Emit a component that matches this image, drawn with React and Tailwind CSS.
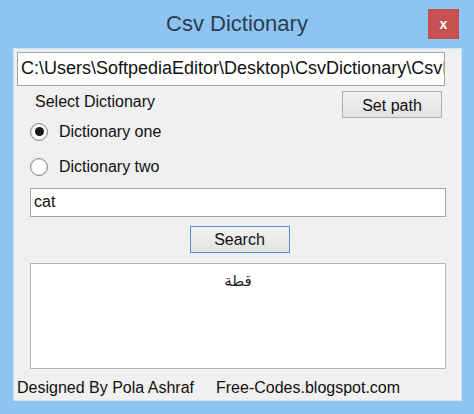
import { useState } from 'react';

const font = { fontFamily: '"Liberation Sans", "DejaVu Sans", Arial, sans-serif' };

const Radio = ({ checked, label, onClick }) => (
    <div className="flex items-center h-[24px] cursor-default" onClick={onClick}>
        <span className="w-[18px] h-[18px] rounded-full border border-[#8a8a8a] bg-white flex items-center justify-center shadow-[inset_0_0_0_1px_#e6e6e6]">
            {checked && <span className="w-[9px] h-[9px] rounded-full bg-[#1a1a1a]"></span>}
        </span>
        <span className="ml-[11px] text-[16px] text-[#111]">{label}</span>
    </div>
);

const App = () => {
    const [dict, setDict] = useState('one');
    const [word, setWord] = useState('cat');

    return (
        <div className="w-[474px] h-[414px] bg-[#8ec4f2] flex flex-col" style={font}>
            {/* Title bar */}
            <div className="h-[48px] grid grid-cols-[1fr_auto_1fr]">
                <div></div>
                <div className="text-[22px] text-[#2b3d52] pt-[10px] leading-[28px]">Csv Dictionary</div>
                <div className="flex justify-end pt-[9px] pr-[15px]">
                    <div className="w-[31px] h-[30px] bg-[#c75050] flex items-center justify-center text-white text-[14px] font-bold leading-none">x</div>
                </div>
            </div>

            {/* Client area */}
            <div className="mx-[12px] ml-[13px] h-[353px] bg-[#f0f0f0] border border-[#cfe3f5] flex flex-col">
                <div className="mt-[3px] ml-[3px] w-[428px] h-[35px] bg-white border border-[#a3a3a3] flex items-center pl-[3px] overflow-hidden whitespace-nowrap text-[18px] text-[#111]">
                    C:\Users\SoftpediaEditor\Desktop\CsvDictionary\CsvDictionary.csv
                </div>

                <div className="flex justify-between pl-[16px] pr-[19px] mt-[5px]">
                    <div className="flex flex-col">
                        <div className="ml-[5px] text-[16px] leading-[18px] mt-[2px] text-[#111]">Select Dictionary</div>
                        <div className="mt-[9px]">
                            <Radio checked={dict === 'one'} label="Dictionary one" onClick={() => setDict('one')} />
                        </div>
                        <div className="mt-[11px]">
                            <Radio checked={dict === 'two'} label="Dictionary two" onClick={() => setDict('two')} />
                        </div>
                    </div>
                    <button className="w-[100px] h-[27px] border border-[#adadad] bg-gradient-to-b from-[#f2f2f2] to-[#e3e3e3] text-[16px] text-[#111] pt-[2px]">
                        Set path
                    </button>
                </div>

                <div className="ml-[16px] mt-[9px] w-[416px] h-[31px] bg-white border border-[#a3a3a3] flex items-center">
                    <input
                        value={word}
                        onChange={(e) => setWord(e.target.value)}
                        className="w-full px-[3px] text-[16px] text-[#111] outline-none bg-transparent"
                    />
                </div>

                <div className="flex justify-center mt-[9px] pl-[4px]">
                    <button className="w-[100px] h-[27px] border border-[#4c93d9] bg-gradient-to-b from-[#f2f2f2] to-[#e3e3e3] text-[16px] text-[#111]">
                        Search
                    </button>
                </div>

                <div className="ml-[16px] mt-[10px] w-[416px] h-[110px] bg-white border border-[#b5b5b5] flex justify-center pt-[6px]">
                    <span className="text-[15px] text-[#222]" style={{ fontFamily: '"DejaVu Sans", sans-serif' }} dir="rtl">قطة</span>
                </div>

                <div className="flex mt-[7px] ml-[3px] text-[16px] text-[#111]">
                    <span>Designed By Pola Ashraf</span>
                    <span className="ml-[22px]">Free-Codes.blogspot.com</span>
                </div>
            </div>
        </div>
    );
};

export default App;
